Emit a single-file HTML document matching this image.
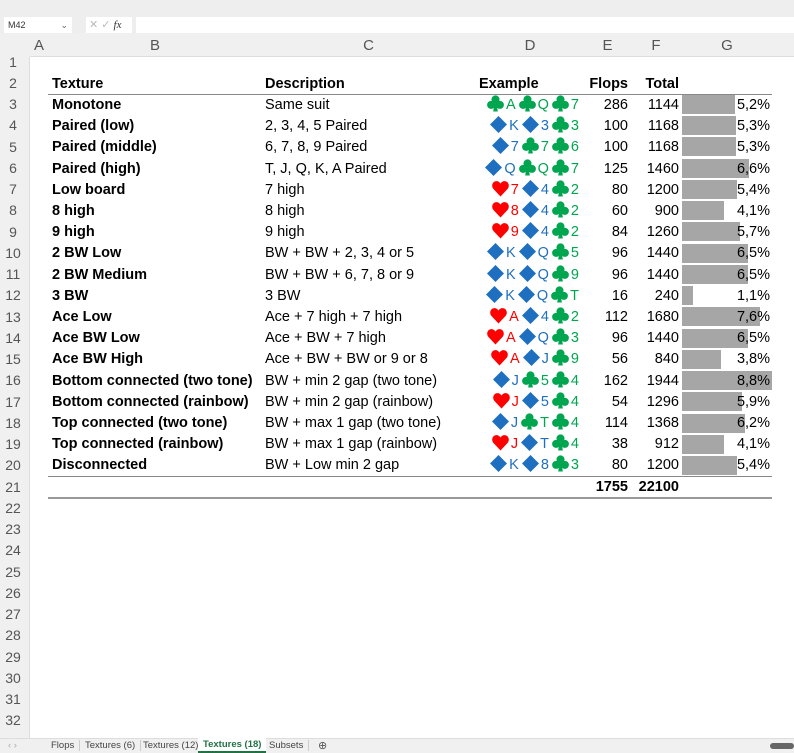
<!DOCTYPE html><html><head><style>
*{margin:0;padding:0;box-sizing:border-box}
body{width:794px;height:753px;overflow:hidden;background:#fff;font-family:"Liberation Sans",sans-serif;position:relative}
.a{position:absolute}
.top{left:0;top:0;width:794px;height:33px;background:#eeeeee}
.nb{left:4px;top:17px;width:68px;height:16px;background:#fff;font-size:9px;color:#333;padding:3px 4px}
.fx{left:86px;top:17px;width:46px;height:16px;background:#fff;font-size:11px;color:#bbb;padding:1px 3px}
.fb{left:136px;top:17px;width:658px;height:16px;background:#fff}
.ch{left:0;top:33px;width:794px;height:24px;background:#f0f0f0;border-bottom:1px solid #ddd}
.cl{top:37px;font-size:15px;color:#555;text-align:center}
.rh{left:0;top:57px;width:30px;height:681px;background:#f0f0f0;border-right:1px solid #ddd}
.rn{left:0;width:26px;text-align:center;font-size:14px;color:#555}
.r{font-size:14.5px;color:#000;line-height:20px;white-space:nowrap}
.b{font-weight:bold}
.num{text-align:right}
.bar{left:682px;height:19px;background:#a6a6a6}
.g{color:#00a550}.u{color:#1f6fc0}.d{color:#f00}
svg.s{width:17px;height:17px;vertical-align:-3px;margin:0 2px 0 3px;fill:currentColor}
.tabs{left:0;top:738px;width:794px;height:15px;background:#f0f0f0;border-top:1px solid #ddd;font-size:9.5px;color:#444}
</style></head><body>
<svg width="0" height="0" style="position:absolute">
<symbol id="c" viewBox="0 0 16 16"><circle cx="8" cy="4.2" r="3.8"/><circle cx="3.9" cy="9.3" r="3.8"/><circle cx="12.1" cy="9.3" r="3.8"/><path d="M7 8h2l1.2 7.5h-4.4z"/></symbol>
<symbol id="dd" viewBox="0 0 16 16"><path d="M8 0L16 8L8 16L0 8z"/></symbol>
<symbol id="h" viewBox="0 0 16 16"><path d="M8 15.5L1.3 8.3C-1 5.6 0.4 1 4.2 1 6.2 1 7.4 2.3 8 3.4 8.6 2.3 9.8 1 11.8 1 15.6 1 17 5.6 14.7 8.3z"/></symbol>
</svg>
<div class="a top"></div>
<div class="a nb">M42<span style="position:absolute;right:4px;color:#666">⌄</span></div>
<div class="a fx">✕ ✓ <i style="color:#333;font-family:'Liberation Serif'">fx</i></div>
<div class="a fb"></div>
<div class="a ch"></div>
<div class="a" style="left:0;top:33px;width:30px;height:24px;background:#f0f0f0"></div>
<div class="a cl" style="left:30px;width:18px">A</div>
<div class="a cl" style="left:48px;width:214px">B</div>
<div class="a cl" style="left:262px;width:213px">C</div>
<div class="a cl" style="left:475px;width:110px">D</div>
<div class="a cl" style="left:585px;width:45px">E</div>
<div class="a cl" style="left:630px;width:52px">F</div>
<div class="a cl" style="left:682px;width:90px">G</div>
<div class="a rh"></div>
<div class="a rn" style="top:54px">1</div>
<div class="a rn" style="top:75px">2</div>
<div class="a rn" style="top:96px">3</div>
<div class="a rn" style="top:117px">4</div>
<div class="a rn" style="top:139px">5</div>
<div class="a rn" style="top:160px">6</div>
<div class="a rn" style="top:181px">7</div>
<div class="a rn" style="top:202px">8</div>
<div class="a rn" style="top:224px">9</div>
<div class="a rn" style="top:245px">10</div>
<div class="a rn" style="top:266px">11</div>
<div class="a rn" style="top:287px">12</div>
<div class="a rn" style="top:309px">13</div>
<div class="a rn" style="top:330px">14</div>
<div class="a rn" style="top:351px">15</div>
<div class="a rn" style="top:372px">16</div>
<div class="a rn" style="top:394px">17</div>
<div class="a rn" style="top:415px">18</div>
<div class="a rn" style="top:436px">19</div>
<div class="a rn" style="top:457px">20</div>
<div class="a rn" style="top:479px">21</div>
<div class="a rn" style="top:500px">22</div>
<div class="a rn" style="top:521px">23</div>
<div class="a rn" style="top:542px">24</div>
<div class="a rn" style="top:564px">25</div>
<div class="a rn" style="top:585px">26</div>
<div class="a rn" style="top:606px">27</div>
<div class="a rn" style="top:627px">28</div>
<div class="a rn" style="top:649px">29</div>
<div class="a rn" style="top:670px">30</div>
<div class="a rn" style="top:691px">31</div>
<div class="a rn" style="top:712px">32</div>

<div class="a" style="left:48px;top:94px;width:724px;height:1px;background:#888"></div>
<div class="a" style="left:48px;top:476px;width:724px;height:1px;background:#888"></div>
<div class="a" style="left:48px;top:497px;width:724px;height:2px;background:#999"></div>

<div class="a r b" style="left:52px;top:74px">Texture</div>
<div class="a r b" style="left:265px;top:74px">Description</div>
<div class="a r b" style="left:479px;top:74px">Example</div>
<div class="a r b num" style="left:585px;top:74px;width:43px">Flops</div>
<div class="a r b num" style="left:630px;top:74px;width:49px">Total</div>

<div class="a bar" style="top:95px;width:53px"></div><div class="a bar" style="top:116px;width:54px"></div><div class="a bar" style="top:137px;width:54px"></div><div class="a bar" style="top:159px;width:67px"></div><div class="a bar" style="top:180px;width:55px"></div><div class="a bar" style="top:201px;width:42px"></div><div class="a bar" style="top:222px;width:58px"></div><div class="a bar" style="top:244px;width:66px"></div><div class="a bar" style="top:265px;width:66px"></div><div class="a bar" style="top:286px;width:11px"></div><div class="a bar" style="top:307px;width:78px"></div><div class="a bar" style="top:329px;width:66px"></div><div class="a bar" style="top:350px;width:39px"></div><div class="a bar" style="top:371px;width:90px"></div><div class="a bar" style="top:392px;width:60px"></div><div class="a bar" style="top:414px;width:63px"></div><div class="a bar" style="top:435px;width:42px"></div><div class="a bar" style="top:456px;width:55px"></div>

<div class="a r b" style="left:52px;top:95px;line-height:21.2px">Monotone<br>Paired (low)<br>Paired (middle)<br>Paired (high)<br>Low board<br>8 high<br>9 high<br>2 BW Low<br>2 BW Medium<br>3 BW<br>Ace Low<br>Ace BW Low<br>Ace BW High<br>Bottom connected (two tone)<br>Bottom connected (rainbow)<br>Top connected (two tone)<br>Top connected (rainbow)<br>Disconnected</div>
<div class="a r" style="left:265px;top:95px;line-height:21.2px">Same suit<br>2, 3, 4, 5 Paired<br>6, 7, 8, 9 Paired<br>T, J, Q, K, A Paired<br>7 high<br>8 high<br>9 high<br>BW + BW + 2, 3, 4 or 5<br>BW + BW + 6, 7, 8 or 9<br>3 BW<br>Ace + 7 high + 7 high<br>Ace + BW + 7 high<br>Ace + BW + BW or 9 or 8<br>BW + min 2 gap (two tone)<br>BW + min 2 gap (rainbow)<br>BW + max 1 gap (two tone)<br>BW + max 1 gap (rainbow)<br>BW + Low min 2 gap</div>
<div class="a r" style="left:455px;top:95px;width:124px;text-align:right;line-height:21.2px">
<span class="g"><svg class="s"><use href="#c"/></svg>A<svg class="s"><use href="#c"/></svg>Q<svg class="s"><use href="#c"/></svg>7</span><br>
<span class="u"><svg class="s"><use href="#dd"/></svg>K<svg class="s"><use href="#dd"/></svg>3</span><span class="g"><svg class="s"><use href="#c"/></svg>3</span><br>
<span class="u"><svg class="s"><use href="#dd"/></svg>7</span><span class="g"><svg class="s"><use href="#c"/></svg>7<svg class="s"><use href="#c"/></svg>6</span><br>
<span class="u"><svg class="s"><use href="#dd"/></svg>Q</span><span class="g"><svg class="s"><use href="#c"/></svg>Q<svg class="s"><use href="#c"/></svg>7</span><br>
<span class="d"><svg class="s"><use href="#h"/></svg>7</span><span class="u"><svg class="s"><use href="#dd"/></svg>4</span><span class="g"><svg class="s"><use href="#c"/></svg>2</span><br>
<span class="d"><svg class="s"><use href="#h"/></svg>8</span><span class="u"><svg class="s"><use href="#dd"/></svg>4</span><span class="g"><svg class="s"><use href="#c"/></svg>2</span><br>
<span class="d"><svg class="s"><use href="#h"/></svg>9</span><span class="u"><svg class="s"><use href="#dd"/></svg>4</span><span class="g"><svg class="s"><use href="#c"/></svg>2</span><br>
<span class="u"><svg class="s"><use href="#dd"/></svg>K<svg class="s"><use href="#dd"/></svg>Q</span><span class="g"><svg class="s"><use href="#c"/></svg>5</span><br>
<span class="u"><svg class="s"><use href="#dd"/></svg>K<svg class="s"><use href="#dd"/></svg>Q</span><span class="g"><svg class="s"><use href="#c"/></svg>9</span><br>
<span class="u"><svg class="s"><use href="#dd"/></svg>K<svg class="s"><use href="#dd"/></svg>Q</span><span class="g"><svg class="s"><use href="#c"/></svg>T</span><br>
<span class="d"><svg class="s"><use href="#h"/></svg>A</span><span class="u"><svg class="s"><use href="#dd"/></svg>4</span><span class="g"><svg class="s"><use href="#c"/></svg>2</span><br>
<span class="d"><svg class="s"><use href="#h"/></svg>A</span><span class="u"><svg class="s"><use href="#dd"/></svg>Q</span><span class="g"><svg class="s"><use href="#c"/></svg>3</span><br>
<span class="d"><svg class="s"><use href="#h"/></svg>A</span><span class="u"><svg class="s"><use href="#dd"/></svg>J</span><span class="g"><svg class="s"><use href="#c"/></svg>9</span><br>
<span class="u"><svg class="s"><use href="#dd"/></svg>J</span><span class="g"><svg class="s"><use href="#c"/></svg>5<svg class="s"><use href="#c"/></svg>4</span><br>
<span class="d"><svg class="s"><use href="#h"/></svg>J</span><span class="u"><svg class="s"><use href="#dd"/></svg>5</span><span class="g"><svg class="s"><use href="#c"/></svg>4</span><br>
<span class="u"><svg class="s"><use href="#dd"/></svg>J</span><span class="g"><svg class="s"><use href="#c"/></svg>T<svg class="s"><use href="#c"/></svg>4</span><br>
<span class="d"><svg class="s"><use href="#h"/></svg>J</span><span class="u"><svg class="s"><use href="#dd"/></svg>T</span><span class="g"><svg class="s"><use href="#c"/></svg>4</span><br>
<span class="u"><svg class="s"><use href="#dd"/></svg>K<svg class="s"><use href="#dd"/></svg>8</span><span class="g"><svg class="s"><use href="#c"/></svg>3</span></div>
<div class="a r num" style="left:585px;top:95px;width:43px;line-height:21.2px">286<br>100<br>100<br>125<br>80<br>60<br>84<br>96<br>96<br>16<br>112<br>96<br>56<br>162<br>54<br>114<br>38<br>80<br><b>1755</b></div>
<div class="a r num" style="left:622px;top:95px;width:57px;line-height:21.2px">1144<br>1168<br>1168<br>1460<br>1200<br>900<br>1260<br>1440<br>1440<br>240<br>1680<br>1440<br>840<br>1944<br>1296<br>1368<br>912<br>1200<br><b>22100</b></div>
<div class="a r num" style="left:690px;top:95px;width:80px;line-height:21.2px">5,2%<br>5,3%<br>5,3%<br>6,6%<br>5,4%<br>4,1%<br>5,7%<br>6,5%<br>6,5%<br>1,1%<br>7,6%<br>6,5%<br>3,8%<br>8,8%<br>5,9%<br>6,2%<br>4,1%<br>5,4%</div>

<div class="a tabs">
<span class="a" style="left:8px;top:1px;color:#aaa">‹ ›</span>
<span class="a" style="left:46px;top:1px;padding:0 5px;border-right:1px solid #ccc">Flops</span>
<span class="a" style="left:80px;top:1px;padding:0 5px;border-right:1px solid #ccc">Textures (6)</span>
<span class="a" style="left:138px;top:1px;padding:0 5px;border-right:1px solid #ccc">Textures (12)</span>
<span class="a" style="left:198px;top:-1px;height:15px;padding:1px 5px;background:#fff;color:#217346;font-weight:bold;border-bottom:2px solid #217346">Textures (18)</span>
<span class="a" style="left:264px;top:1px;padding:0 5px;border-right:1px solid #ccc">Subsets</span>
<span class="a" style="left:318px;top:0px;font-size:11px;color:#555">⊕</span>
<span class="a" style="left:770px;top:4px;width:24px;height:6px;background:#666;border-radius:3px"></span>
</div>
</body></html>
